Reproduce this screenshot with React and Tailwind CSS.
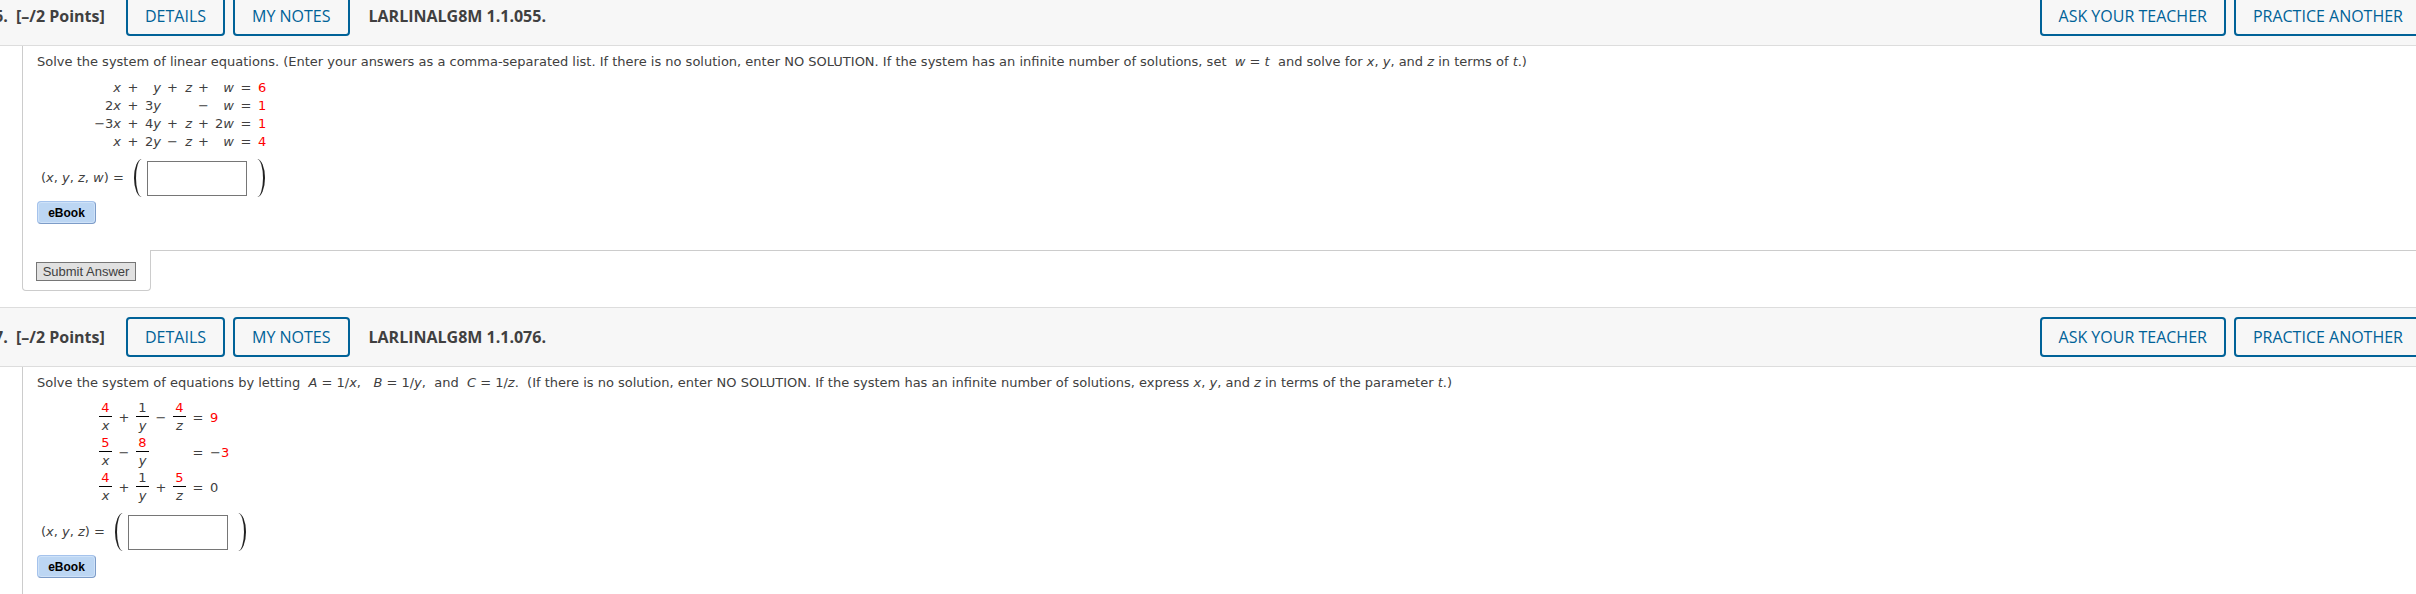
import React from "react";
import clsx from "clsx";

const V = ({ children }) => <i className="italic">{children}</i>;

const Red = ({ children }) => <span className="text-[#ff0000]">{children}</span>;

const HeaderButton = ({ children }) => (
  <button
    type="button"
    className="h-10 shrink-0 whitespace-nowrap rounded border-2 border-[#006298] px-[17px] text-base text-[#006298] cursor-pointer"
  >
    {children}
  </button>
);

const QuestionHeader = ({ number, code, className }) => (
  <header
    className={clsx(
      "flex h-[60px] items-center border-y border-[#dddddd] bg-[#f7f7f7] font-['Open_Sans',sans-serif] text-base text-[#404040]",
      className
    )}
  >
    <h2 className="-ml-1.5 w-[132px] shrink-0 whitespace-nowrap font-bold">{number}. &nbsp;[–/2 Points]</h2>
    <div className="flex gap-2">
      <HeaderButton>DETAILS</HeaderButton>
      <HeaderButton>MY NOTES</HeaderButton>
    </div>
    <h3 className="ml-[19px] whitespace-nowrap font-bold">{code}</h3>
    <div className="-mr-1.5 ml-auto flex gap-2">
      <HeaderButton>ASK YOUR TEACHER</HeaderButton>
      <HeaderButton>PRACTICE ANOTHER</HeaderButton>
    </div>
  </header>
);

const AnswerRow = ({ id, children }) => (
  <div className="ml-1 flex h-[38px] items-center">
    <label htmlFor={id} className="mr-2.5 whitespace-nowrap">
      {children}
    </label>
    <span className="h-[38px] w-2 rounded-[100%_0_0_100%/50%] border-l-2 border-[#222222]" />
    <input id={id} type="text" className="ml-[5px] h-[35px] w-[100px] border border-[#767676] bg-white px-1 outline-none" />
    <span className="ml-2.5 h-[38px] w-2 rounded-[0_100%_100%_0/50%] border-r-2 border-[#222222]" />
  </div>
);

const EBookButton = () => (
  <button
    type="button"
    className="mt-1 block h-[23px] w-[59px] rounded border border-t-[#a5c3ec] border-r-[#7d9cc8] border-b-[#7d9cc8] border-l-[#a5c3ec] bg-[#bcd6f3] font-['Liberation_Sans',Arial,sans-serif] text-xs font-bold text-black shadow-[inset_0_0_0_1px_#cfe2f8] cursor-pointer"
  >
    eBook
  </button>
);

const linearRows = [
  ["x", "+", "y", "+", "z", "+", "w", "6"],
  ["2x", "+", "3y", "", "", "−", "w", "1"],
  ["−3x", "+", "4y", "+", "z", "+", "2w", "1"],
  ["x", "+", "2y", "−", "z", "+", "w", "4"],
];

// "−3x" -> upright coefficient, italic variable
const Term = ({ text }) => (
  <>
    {text.slice(0, -1)}
    <V>{text.slice(-1)}</V>
  </>
);

const LinearSystem = () => (
  <table className="ml-[51px] table-fixed border-collapse">
    <colgroup>
      <col className="w-[33px]" />
      <col className="w-6" />
      <col className="w-4" />
      <col className="w-[23px]" />
      <col className="w-2" />
      <col className="w-[23px]" />
      <col className="w-[19px]" />
      <col className="w-6" />
      <col className="w-[9px]" />
    </colgroup>
    <tbody>
      {linearRows.map(([a, op1, b, op2, c, op3, d, rhs], i) => (
        <tr key={i} className="h-[18px] leading-[18px]">
          <td className="p-0 text-right"><Term text={a} /></td>
          <td className="p-0 text-center">{op1}</td>
          <td className="p-0 text-right"><Term text={b} /></td>
          <td className="p-0 text-center">{op2}</td>
          <td className="p-0 text-right"><Term text={c} /></td>
          <td className="p-0 text-center">{op3}</td>
          <td className="p-0 text-right"><Term text={d} /></td>
          <td className="p-0 text-center">=</td>
          <td className="p-0"><Red>{rhs}</Red></td>
        </tr>
      ))}
    </tbody>
  </table>
);

const Fraction = ({ top, bottom, red }) => (
  <span className="flex w-[13px] flex-col items-center">
    <span className={clsx("h-[17px] w-full border-b border-black text-center leading-4", red && "text-[#ff0000]")}>{top}</span>
    <span className="h-[18px] leading-[18px]"><V>{bottom}</V></span>
  </span>
);

const fractionRows = [
  { x: ["4", true], op1: "+", y: ["1", false], op2: "−", z: ["4", true], rhs: <Red>9</Red> },
  { x: ["5", true], op1: "−", y: ["8", true], op2: "", z: null, rhs: <>−<Red>3</Red></> },
  { x: ["4", true], op1: "+", y: ["1", false], op2: "+", z: ["5", true], rhs: "0" },
];

const FractionSystem = () => (
  <table className="ml-[62px] table-fixed border-collapse">
    <colgroup>
      <col className="w-[13px]" />
      <col className="w-6" />
      <col className="w-[13px]" />
      <col className="w-6" />
      <col className="w-[13px]" />
      <col className="w-6" />
      <col className="w-6" />
    </colgroup>
    <tbody>
      {fractionRows.map((row, i) => (
        <tr key={i} className="h-[35px]">
          <td className="p-0"><Fraction top={row.x[0]} red={row.x[1]} bottom="x" /></td>
          <td className="p-0 text-center">{row.op1}</td>
          <td className="p-0"><Fraction top={row.y[0]} red={row.y[1]} bottom="y" /></td>
          <td className="p-0 text-center">{row.op2}</td>
          <td className="p-0">{row.z && <Fraction top={row.z[0]} red={row.z[1]} bottom="z" />}</td>
          <td className="p-0 text-center">=</td>
          <td className="whitespace-nowrap p-0">{row.rhs}</td>
        </tr>
      ))}
    </tbody>
  </table>
);

const App = () => (
  <main className="flex h-screen flex-col overflow-hidden bg-white font-[Verdana,'DejaVu_Sans',sans-serif] text-[13px] leading-[18px] text-[#404040]">
    <section>
      <QuestionHeader number="6" code="LARLINALG8M 1.1.055." className="-mt-3.5" />
      <div className="ml-[22px] border-l border-[#cccccc] pt-[7px] pb-[26px] pl-3.5">
        <p>
          Solve the system of linear equations. (Enter your answers as a comma-separated list. If there is no solution,
          enter NO SOLUTION. If the system has an infinite number of solutions, set &nbsp;<V>w</V> = <V>t</V>&nbsp; and
          solve for <V>x</V>, <V>y</V>, and <V>z</V> in terms of <V>t</V>.)
        </p>
        <div className="mt-2 mb-2">
          <LinearSystem />
        </div>
        <AnswerRow id="answer-055">
          (<V>x</V>, <V>y</V>, <V>z</V>, <V>w</V>) =
        </AnswerRow>
        <EBookButton />
      </div>
      <div className="mb-4 ml-[22px] flex">
        <div className="h-[41px] w-[129px] shrink-0 rounded-b border-x border-b border-[#cccccc] pt-3 pl-[13px]">
          <button
            type="button"
            className="block h-[19px] w-[100px] border border-[#767676] bg-[#e1e1e1] font-['Liberation_Sans',Arial,sans-serif] text-[13px] leading-none whitespace-nowrap cursor-pointer"
          >
            Submit Answer
          </button>
        </div>
        <div className="grow border-t border-[#cccccc]" />
      </div>
    </section>

    <section className="flex grow flex-col">
      <QuestionHeader number="7" code="LARLINALG8M 1.1.076." />
      <div className="ml-[22px] grow border-l border-[#cccccc] pt-[7px] pl-3.5">
        <p>
          Solve the system of equations by letting &nbsp;<V>A</V> = 1/<V>x</V>, &nbsp;&nbsp;<V>B</V> = 1/<V>y</V>,
          &nbsp;and &nbsp;<V>C</V> = 1/<V>z</V>. &nbsp;(If there is no solution, enter NO SOLUTION. If the system has an
          infinite number of solutions, express <V>x</V>, <V>y</V>, and <V>z</V> in terms of the parameter <V>t</V>.)
        </p>
        <div className="mt-2 mb-2">
          <FractionSystem />
        </div>
        <AnswerRow id="answer-076">
          (<V>x</V>, <V>y</V>, <V>z</V>) =
        </AnswerRow>
        <EBookButton />
      </div>
    </section>
  </main>
);

export default App;
